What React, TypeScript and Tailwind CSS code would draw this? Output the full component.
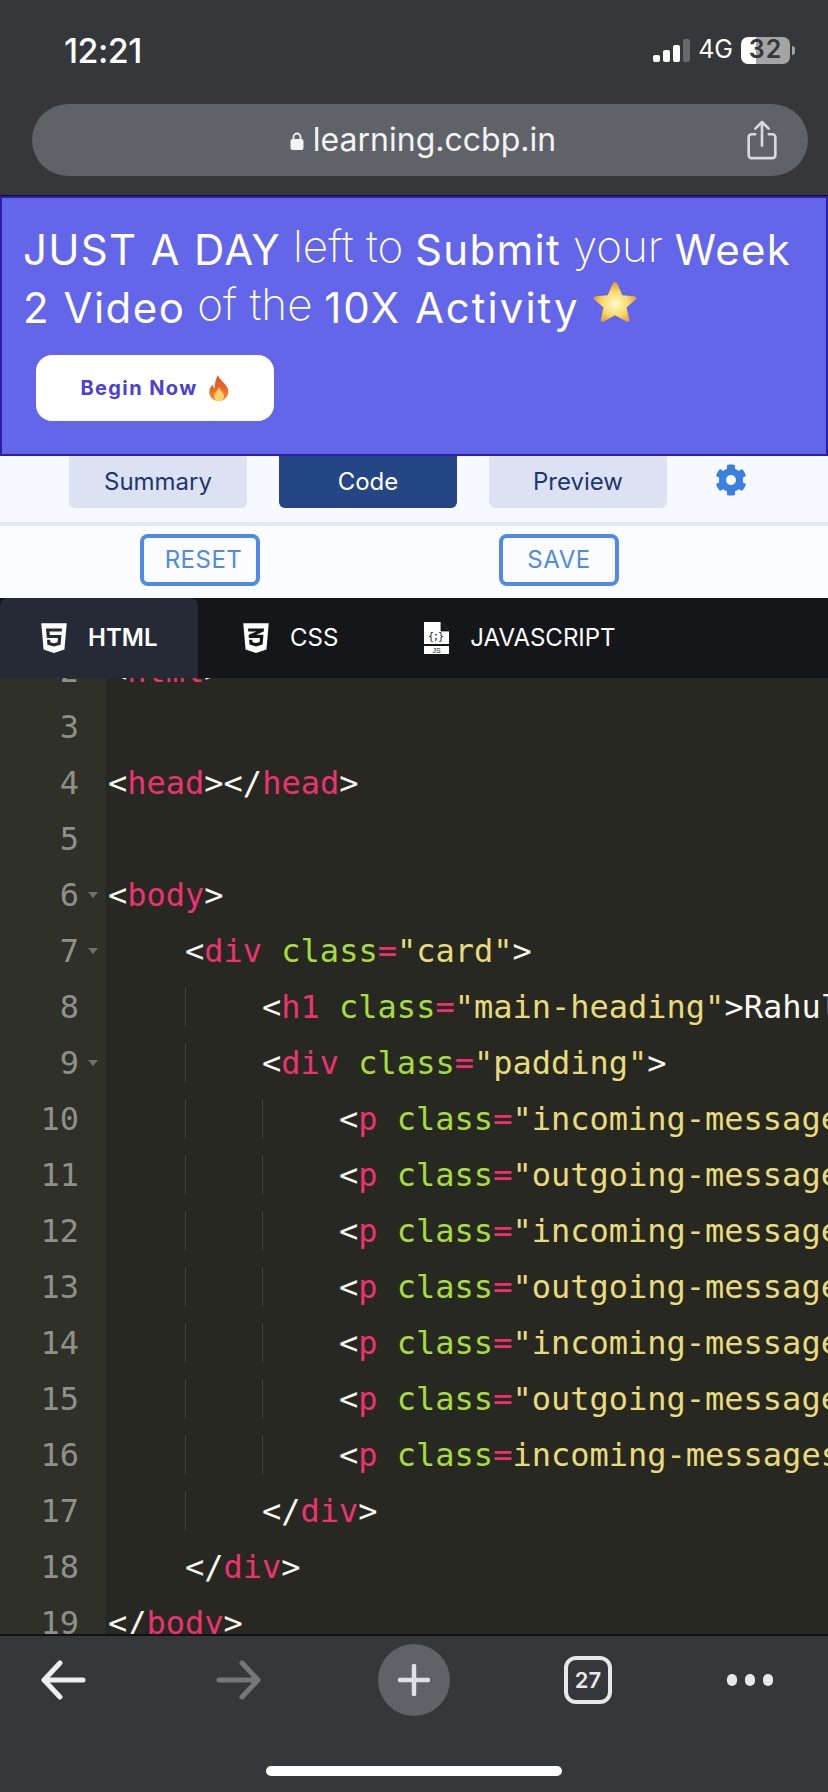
import { FaCog, FaCss3Alt, FaHtml5 } from "react-icons/fa";

type Token = [string, string];

const P = "text-[#f8f8f2]";
const T = "text-[#ec3370]";
const A = "text-[#a6dc3c]";
const S = "text-[#e8dc7a]";

function tag(name: string, attrs: string, value: string): Token[] {
  return [
    ["<", P],
    [name, T],
    [" ", P],
    [attrs, A],
    ["=", T],
    [value, S],
  ];
}

interface Line {
  n: number;
  indent?: number;
  guides?: number;
  fold?: boolean;
  tokens: Token[];
}

const lines: Line[] = [
  { n: 2, tokens: [["<", P], ["html", T], [">", P]] },
  { n: 3, tokens: [] },
  { n: 4, tokens: [["<", P], ["head", T], ["></", P], ["head", T], [">", P]] },
  { n: 5, tokens: [] },
  { n: 6, fold: true, tokens: [["<", P], ["body", T], [">", P]] },
  { n: 7, fold: true, indent: 1, tokens: [...tag("div", "class", '"card"'), [">", P]] },
  { n: 8, indent: 2, guides: 1, tokens: [...tag("h1", "class", '"main-heading"'), [">Rahul Attuluri</", P]] },
  { n: 9, fold: true, indent: 2, guides: 1, tokens: [...tag("div", "class", '"padding"'), [">", P]] },
  { n: 10, indent: 3, guides: 2, tokens: tag("p", "class", '"incoming-message"') },
  { n: 11, indent: 3, guides: 2, tokens: tag("p", "class", '"outgoing-message"') },
  { n: 12, indent: 3, guides: 2, tokens: tag("p", "class", '"incoming-message"') },
  { n: 13, indent: 3, guides: 2, tokens: tag("p", "class", '"outgoing-message"') },
  { n: 14, indent: 3, guides: 2, tokens: tag("p", "class", '"incoming-message"') },
  { n: 15, indent: 3, guides: 2, tokens: tag("p", "class", '"outgoing-message"') },
  { n: 16, indent: 3, guides: 2, tokens: tag("p", "class", "incoming-messages") },
  { n: 17, indent: 2, guides: 1, tokens: [["</", P], ["div", T], [">", P]] },
  { n: 18, indent: 1, tokens: [["</", P], ["div", T], [">", P]] },
  { n: 19, tokens: [["</", P], ["body", T], [">", P]] },
];

function CodeLine({ line }: { line: Line }) {
  const indent = line.indent ?? 0;
  const guides = line.guides ?? 0;
  return (
    <div className="flex h-[56px] items-center">
      <div className="flex h-full w-[106px] shrink-0 items-center bg-[#2f3129] text-[#8f908a]">
        <span className="w-[79px] text-right">{line.n}</span>
        {line.fold && (
          <span className="ml-[9px] h-0 w-0 border-x-[5px] border-t-[6px] border-x-transparent border-t-[#6f706a]" />
        )}
      </div>
      <div className="flex min-w-0 flex-1 items-center pl-[2px]">
        {Array.from({ length: indent }).map((_, i) => (
          <span
            key={i}
            className={
              i > 0 && i <= guides
                ? "h-[38px] w-[77px] shrink-0 border-l border-dotted border-[#55564f]"
                : "h-[38px] w-[77px] shrink-0"
            }
          />
        ))}
        <span className="whitespace-pre">
          {line.tokens.map(([text, color], i) => (
            <span key={i} className={color}>
              {text}
            </span>
          ))}
        </span>
      </div>
    </div>
  );
}

function Star() {
  return (
    <svg viewBox="0 0 44 44" className="inline-block h-[46px] w-[46px] align-[-3px]">
      <defs>
        <radialGradient id="star" cx="50%" cy="55%" r="55%">
          <stop offset="0%" stopColor="#fff8d2" />
          <stop offset="55%" stopColor="#fbdc6a" />
          <stop offset="100%" stopColor="#d99a2c" />
        </radialGradient>
      </defs>
      <path
        d="M22 2c1.2 0 2 1 2.6 2.4l4.4 10.2 11 1c2.4.2 3 2 1.4 3.4l-8.400 7.400 2.600 11c.5 2.200-1 3.200-3 2L22 33.600 11.400 39.400c-2 1.200-3.500.2-3-2l2.600-11-8.400-7.400c-1.600-1.400-1-3.200 1.400-3.400l11-1 4.400-10.200C20 3 20.800 2 22 2z"
        fill="url(#star)"
      />
    </svg>
  );
}

function Flame() {
  return (
    <svg viewBox="0 0 22 26" className="ml-[10px] h-[26px] w-[22px]">
      <defs>
        <linearGradient id="flame" x1="0" y1="0" x2="0" y2="1">
          <stop offset="0%" stopColor="#e2472b" />
          <stop offset="100%" stopColor="#f58a2a" />
        </linearGradient>
      </defs>
      <path d="M10 0c1 5 8 8 10 14 1.500 6-3 12-9 12S0 21 1.500 15c.6-2.500 2-4 3-5.500.4 2 1 3 2.200 3.600C6.500 8.500 8 4 10 0z" fill="url(#flame)" />
      <path d="M11 12c.5 3 5 5 5 9 0 3-2.200 5-5 5s-5-2-5-5c0-3.500 4-5 5-9z" fill="#fbd26a" />
    </svg>
  );
}

function JsFile() {
  return (
    <svg viewBox="0 0 25 32" className="h-[32px] w-[25px]">
      <path d="M0 0h17l8 9v13H0z" fill="#fff" />
      <path d="M17 0v9h8z" fill="#14161a" stroke="#14161a" strokeWidth="0.8" />
      <path d="M0 24h25v8H0z" fill="#fff" />
      <text x="11.500" y="18" textAnchor="middle" fontSize="10" fontFamily="'DejaVu Sans Mono', monospace" letterSpacing="-1" fill="#14161a">
        {"{;}"}
      </text>
      <text x="12.500" y="31" textAnchor="middle" fontSize="7" fontFamily="'Liberation Sans', sans-serif" fill="#14161a">
        JS
      </text>
    </svg>
  );
}

function NavArrow({ flip, color }: { flip?: boolean; color: string }) {
  return (
    <svg viewBox="0 0 46 40" className={flip ? "h-[40px] w-[46px] -scale-x-100" : "h-[40px] w-[46px]"}>
      <path
        d="M43 20H4M20 3L4 20l16 17"
        fill="none"
        stroke={color}
        strokeWidth="5"
        strokeLinecap="round"
        strokeLinejoin="round"
      />
    </svg>
  );
}

function SubTab({ label, active }: { label: string; active?: boolean }) {
  return (
    <div
      className={
        active
          ? "flex h-[52px] w-[178px] items-center justify-center rounded-b-[6px] bg-[#244684] text-[24px] text-white"
          : "flex h-[52px] w-[178px] items-center justify-center rounded-b-[6px] bg-[#dce2f2] text-[24px] text-[#1d3770]"
      }
    >
      {label}
    </div>
  );
}

function OutlineButton({ label, inset }: { label: string; inset?: boolean }) {
  return (
    <div
      className={
        inset
          ? "flex h-[52px] w-[120px] items-center justify-center rounded-[8px] border-[4px] border-[#4f8ae8] pl-[7px] text-[24px] tracking-[0.5px] text-[#4f8ae8]"
          : "flex h-[52px] w-[120px] items-center justify-center rounded-[8px] border-[4px] border-[#4f8ae8] text-[24px] tracking-[0.5px] text-[#4f8ae8]"
      }
    >
      {label}
    </div>
  );
}

export default function App() {
  return (
    <div className="flex h-[1792px] w-[828px] flex-col overflow-hidden bg-[#36373a] font-['Inter',sans-serif]">
      {/* browser chrome */}
      <header className="h-[196px] shrink-0 border-b border-[#111] pt-[30px]">
        <div className="flex h-[40px] items-center pl-[64px] pr-[33px] text-white">
          <span className="text-[34px] font-medium tracking-[-0.5px]">12:21</span>
          <div className="ml-auto flex items-center">
            <div className="flex items-end gap-[3px]">
              <span className="h-[7px] w-[7px] rounded-[2px] bg-white" />
              <span className="h-[12px] w-[7px] rounded-[2px] bg-white" />
              <span className="h-[17px] w-[7px] rounded-[2px] bg-white" />
              <span className="h-[23px] w-[7px] rounded-[2px] bg-[#68696b]" />
            </div>
            <span className="ml-[8px] text-[25px] font-normal">4G</span>
            <div className="ml-[8px] flex h-[27px] w-[49px] items-center justify-center rounded-[7px] bg-[linear-gradient(90deg,#fff_31%,#a4a4a5_31%)] text-[25px] font-semibold tracking-[1px] text-[#36373a]">
              32
            </div>
            <span className="ml-[2px] h-[9px] w-[3px] rounded-r-full bg-[#a4a4a5]" />
          </div>
        </div>
        <div className="ml-[32px] mr-[20px] mt-[34px] flex h-[72px] items-center rounded-[36px] bg-[#5f6266] pr-[30px]">
          <div className="flex flex-1 items-center justify-center pl-[68px] text-[#f2f3f5]">
            <svg viewBox="0 0 14 18" className="mr-[9px] mt-[2px] h-[18px] w-[14px]">
              <path d="M3.500 8V5a3.500 3.500 0 0 1 7 0v3" fill="none" stroke="#f2f3f5" strokeWidth="1.800" />
              <rect x="0.500" y="7" width="13" height="11" rx="2" fill="#f2f3f5" />
            </svg>
            <span className="text-[32px]">learning.ccbp.in</span>
          </div>
          <svg viewBox="0 0 32 42" className="h-[40px] w-[32px]">
            <path
              d="M10 15H5a3 3 0 0 0-3 3v19a3 3 0 0 0 3 3h22a3 3 0 0 0 3-3V18a3 3 0 0 0-3-3h-5"
              fill="none"
              stroke="#d6d9de"
              strokeWidth="2.800"
            />
            <path
              d="M16 27V3M9 9l7-7 7 7"
              fill="none"
              stroke="#d6d9de"
              strokeWidth="2.800"
              strokeLinecap="round"
              strokeLinejoin="round"
            />
          </svg>
        </div>
      </header>

      {/* banner */}
      <section className="h-[260px] shrink-0 border-2 border-[#2a20a8] bg-[#6366e9] pl-[21px] pt-[19px] text-white">
        <div className="text-[42px] font-[430] whitespace-nowrap">
          <p className="h-[58px] leading-[58px]">
            <span className="tracking-[1.3px]">JUST A DAY</span>{" "}
            <span className="align-[3px] text-[44px] font-extralight">left to</span>{" "}
            <span className="tracking-[1.3px]">Submit</span>{" "}
            <span className="align-[3px] text-[44px] font-extralight">your</span>{" "}
            <span className="tracking-[1.3px]">Week</span>
          </p>
          <p className="h-[58px] leading-[58px]">
            <span className="tracking-[1.5px]">2 Video</span>{" "}
            <span className="align-[3px] text-[44px] font-extralight">of the</span>{" "}
            <span className="tracking-[2px]">10X Activity</span> <Star />
          </p>
        </div>
        <div className="ml-[13px] mt-[22px] flex h-[66px] w-[238px] items-center justify-center rounded-[16px] bg-white">
          <span className="text-[20px] font-bold tracking-[1.4px] text-[#4c3fd6]">Begin Now</span>
          <Flame />
        </div>
      </section>

      {/* summary / code / preview */}
      <nav className="flex h-[70px] shrink-0 items-start gap-[32px] border-b-[4px] border-[#dce8fb] bg-[#f6f9ff] pl-[69px]">
        <SubTab label="Summary" />
        <SubTab label="Code" active />
        <SubTab label="Preview" />
        <FaCog className="ml-[16px] mt-[8px] h-[32px] w-[32px] text-[#3a80e0]" />
      </nav>
      <div className="flex h-[72px] shrink-0 items-start gap-[239px] bg-[#fbfcff] pl-[140px] pt-[8px]">
        <OutlineButton label="RESET" inset />
        <OutlineButton label="SAVE" />
      </div>

      {/* file tabs */}
      <div className="flex h-[80px] shrink-0 items-center bg-[#14161a] text-[24px] text-white">
        <div className="flex h-full w-[198px] items-center rounded-t-[8px] bg-[#262a36] pl-[38px] font-semibold">
          <FaHtml5 className="h-[34px] w-[32px]" />
          <span className="ml-[18px]">HTML</span>
        </div>
        <div className="ml-[42px] flex items-center">
          <FaCss3Alt className="h-[34px] w-[32px]" />
          <span className="ml-[18px]">CSS</span>
        </div>
        <div className="ml-[86px] flex items-center">
          <JsFile />
          <span className="ml-[21px]">JAVASCRIPT</span>
        </div>
      </div>

      {/* editor */}
      <main className="h-[956px] shrink-0 overflow-hidden bg-[#272822] font-['DejaVu_Sans_Mono',monospace] text-[32px]">
        <div className="-mt-[35px]">
          {lines.map((line) => (
            <CodeLine key={line.n} line={line} />
          ))}
        </div>
      </main>

      {/* bottom toolbar */}
      <footer className="relative flex-1 border-t-2 border-[#111]">
        <div className="flex h-[84px] items-center pl-[40px] pt-[4px]">
          <NavArrow color="#eceef1" />
          <div className="ml-[130px]">
            <NavArrow flip color="#75777a" />
          </div>
          <div className="ml-[116px] flex h-[72px] w-[72px] items-center justify-center rounded-full bg-[#5f6266] text-[#dfe1e5]">
            <svg viewBox="0 0 32 32" className="h-[32px] w-[32px]">
              <path d="M16 2v28M2 16h28" stroke="currentColor" strokeWidth="4.500" strokeLinecap="round" />
            </svg>
          </div>
          <div className="ml-[114px] flex h-[48px] w-[48px] items-center justify-center rounded-[12px] border-[4px] border-[#e6e8ec] text-[22px] font-semibold text-[#e6e8ec]">
            27
          </div>
          <div className="ml-[115px] flex gap-[8px]">
            <span className="h-[12px] w-[10px] rounded-full bg-[#e6e8ec]" />
            <span className="h-[12px] w-[10px] rounded-full bg-[#e6e8ec]" />
            <span className="h-[12px] w-[10px] rounded-full bg-[#e6e8ec]" />
          </div>
        </div>
        <div className="absolute bottom-[16px] left-[266px] h-[10px] w-[296px] rounded-full bg-white" />
      </footer>
    </div>
  );
}
